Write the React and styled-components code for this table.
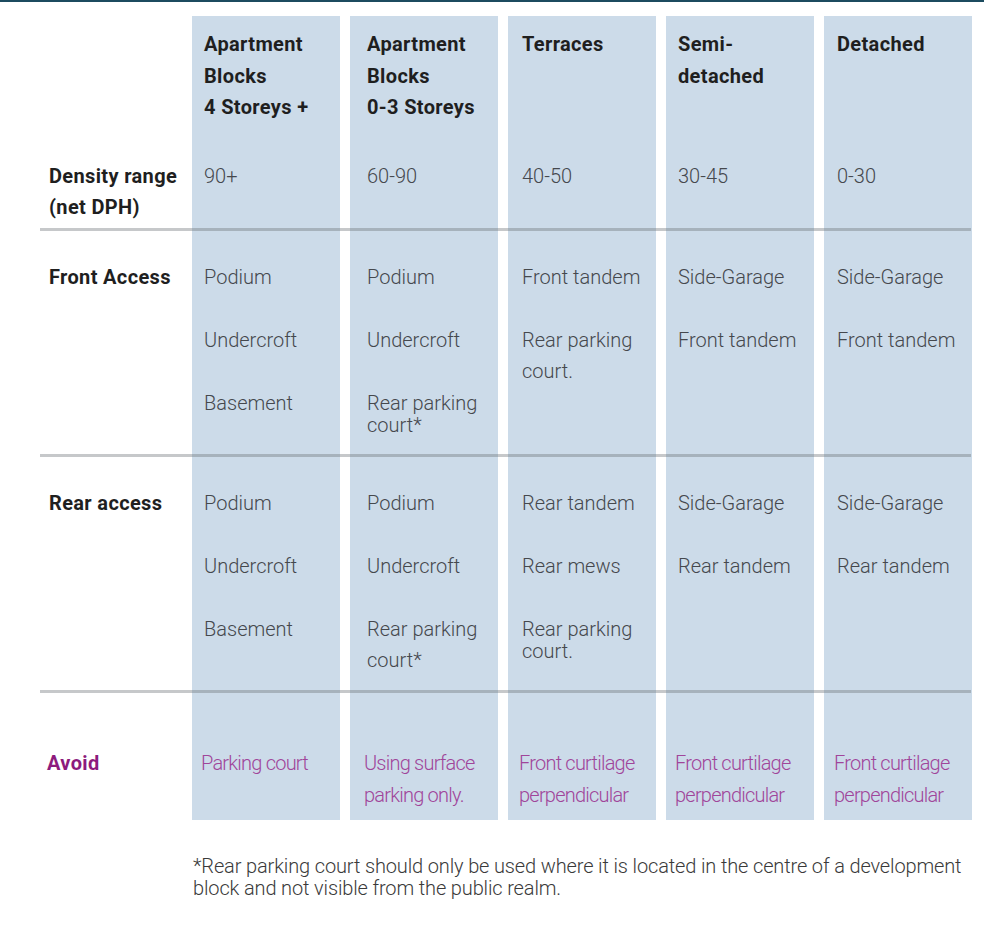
import React from 'react';
import styled, { createGlobalStyle, css } from 'styled-components';

const Global = createGlobalStyle`
  html, body { margin: 0; padding: 0; background: #ffffff; }
  body { font-family: Roboto, "Liberation Sans", Arial, sans-serif; -webkit-font-smoothing: antialiased; }
`;

const BLUE = '#ccdbe9';
const INK = '#1f1f1f';
const SOFT = '#45484d';
const PLUM = '#8d1b7d';
const PLUM_SOFT = '#a0459a';

const Page = styled.div`
  width: 984px;
  min-height: 927px;
  box-sizing: border-box;
`;

const TopBar = styled.div`
  height: 2px;
  background: #1c4b5f;
`;

const Table = styled.div`
  margin: 14px 0 0 40px;
  width: 931px;
  display: flex;
  flex-direction: column;
`;

const Row = styled.div`
  position: relative;
  display: grid;
  grid-template-columns: 142px repeat(5, 148px);
  column-gap: 10px;
  height: ${(p) => p.$h}px;
  ${(p) =>
    p.$rule &&
    css`
      &::after {
        content: '';
        position: absolute;
        left: 0;
        right: 0;
        bottom: 0;
        height: 3px;
        background: rgba(105, 110, 115, 0.38);
      }
    `}
`;

const HeaderRow = styled(Row)`
  grid-template-rows: 145px 1fr;
`;

const Label = styled.div`
  font-weight: 700;
  font-size: 20px;
  letter-spacing: 0.35px;
  color: ${(p) => (p.$avoid ? PLUM : INK)};
  padding: ${(p) => p.$top}px 0 0 ${(p) => (p.$avoid ? 7 : 9)}px;
  line-height: ${(p) => p.$lh || 31}px;
  grid-row: ${(p) => p.$row || 'auto'};
  grid-column: 1;
`;

const TitleCell = styled.div`
  background: ${BLUE};
  padding: 13px 0 0 ${(p) => p.$pad}px;
  font-weight: 700;
  font-size: 20px;
  letter-spacing: 0.35px;
  line-height: 31.5px;
  color: ${INK};
  grid-row: 1;
`;

const DensityCell = styled.div`
  background: ${BLUE};
  padding-left: ${(p) => p.$pad}px;
  font-weight: 300;
  font-size: 20px;
  line-height: 31px;
  color: ${SOFT};
  grid-row: 2;
`;

const ListCell = styled.div`
  background: ${BLUE};
  padding: 30.5px 0 0 ${(p) => p.$pad}px;
  display: flex;
  flex-direction: column;
  gap: 32px;
  font-weight: 300;
  font-size: 20px;
  color: ${SOFT};
`;

const Item = styled.div`
  line-height: ${(p) => (p.$tight ? 22 : 31)}px;
  margin-top: ${(p) => (p.$tight ? 4.5 : 0)}px;
`;

const AvoidCell = styled.div`
  background: ${BLUE};
  padding: 54px 0 0 ${(p) => p.$pad - 3}px;
  font-weight: 300;
  font-size: 20px;
  line-height: 32px;
  letter-spacing: -0.78px;
  color: ${PLUM_SOFT};
`;

const Footnote = styled.p`
  margin: 35px 0 0 193px;
  font-weight: 300;
  font-size: 20px;
  line-height: 22px;
  letter-spacing: -0.14px;
  color: #3a3a3a;
`;

const Lines = ({ lines }) =>
  lines.map((l, i) => (
    <React.Fragment key={i}>
      {i > 0 && <br />}
      {l}
    </React.Fragment>
  ));

const columns = [
  {
    pad: 12,
    title: ['Apartment', 'Blocks', '4 Storeys +'],
    density: '90+',
    front: [{ l: ['Podium'] }, { l: ['Undercroft'] }, { l: ['Basement'] }],
    rear: [{ l: ['Podium'] }, { l: ['Undercroft'] }, { l: ['Basement'] }],
    avoid: ['Parking court'],
  },
  {
    pad: 17,
    title: ['Apartment', 'Blocks', '0-3 Storeys'],
    density: '60-90',
    front: [{ l: ['Podium'] }, { l: ['Undercroft'] }, { l: ['Rear parking', 'court*'], tight: true }],
    rear: [{ l: ['Podium'] }, { l: ['Undercroft'] }, { l: ['Rear parking', 'court*'] }],
    avoid: ['Using surface', 'parking only.'],
  },
  {
    pad: 14,
    title: ['Terraces'],
    density: '40-50',
    front: [{ l: ['Front tandem'] }, { l: ['Rear parking', 'court.'] }],
    rear: [{ l: ['Rear tandem'] }, { l: ['Rear mews'] }, { l: ['Rear parking', 'court.'], tight: true }],
    avoid: ['Front curtilage', 'perpendicular'],
  },
  {
    pad: 12,
    title: ['Semi-', 'detached'],
    density: '30-45',
    front: [{ l: ['Side-Garage'] }, { l: ['Front tandem'] }],
    rear: [{ l: ['Side-Garage'] }, { l: ['Rear tandem'] }],
    avoid: ['Front curtilage', 'perpendicular'],
  },
  {
    pad: 13,
    title: ['Detached'],
    density: '0-30',
    front: [{ l: ['Side-Garage'] }, { l: ['Front tandem'] }],
    rear: [{ l: ['Side-Garage'] }, { l: ['Rear tandem'] }],
    avoid: ['Front curtilage', 'perpendicular'],
  },
];

const AccessRow = ({ label, field, h }) => (
  <Row $h={h} $rule>
    <Label $top={30.5}>{label}</Label>
    {columns.map((c, i) => (
      <ListCell key={i} $pad={c.pad}>
        {c[field].map((it, j) => (
          <Item key={j} $tight={it.tight}>
            <Lines lines={it.l} />
          </Item>
        ))}
      </ListCell>
    ))}
  </Row>
);

export default function App() {
  return (
    <Page>
      <Global />
      <TopBar />
      <Table>
        <HeaderRow $h={215} $rule>
          <Label $top={0} $lh={30.5} $row={2}>
            Density range
            <br />
            (net DPH)
          </Label>
          {columns.map((c, i) => (
            <TitleCell key={`t${i}`} $pad={c.pad} style={{ gridColumn: i + 2 }}>
              <Lines lines={c.title} />
            </TitleCell>
          ))}
          {columns.map((c, i) => (
            <DensityCell key={`d${i}`} $pad={c.pad} style={{ gridColumn: i + 2 }}>
              {c.density}
            </DensityCell>
          ))}
        </HeaderRow>
        <AccessRow label="Front Access" field="front" h={226} />
        <AccessRow label="Rear access" field="rear" h={236} />
        <Row $h={127}>
          <Label $avoid $top={54} $lh={32}>
            Avoid
          </Label>
          {columns.map((c, i) => (
            <AvoidCell key={i} $pad={c.pad}>
              <Lines lines={c.avoid} />
            </AvoidCell>
          ))}
        </Row>
      </Table>
      <Footnote>
        *Rear parking court should only be used where it is located in the centre of a development
        <br />
        block and not visible from the public realm.
      </Footnote>
    </Page>
  );
}
